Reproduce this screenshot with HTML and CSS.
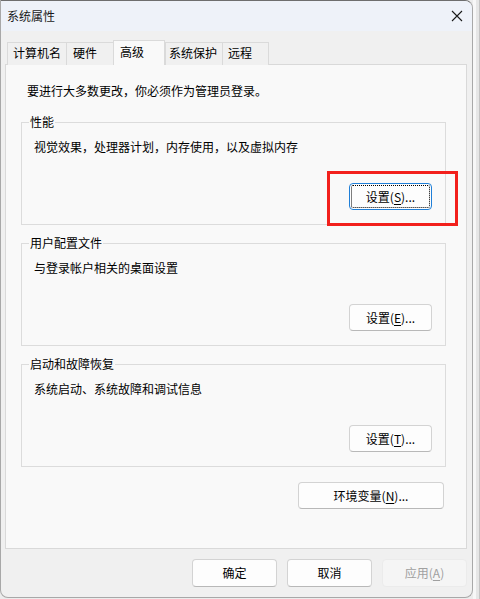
FILE: index.html
```html
<!DOCTYPE html>
<html lang="zh-CN">
<head>
<meta charset="utf-8">
<title>系统属性</title>
<link rel="stylesheet" href="styles.css">
</head>
<body>
<div class="window">
  <div class="titlebar">
    <span class="title">系统属性</span>
    <svg class="close" width="12" height="12" viewBox="0 0 12 12" aria-hidden="true">
      <path d="M1 1 L11 11 M11 1 L1 11" stroke="#1a1a1a" stroke-width="1.1" fill="none"/>
    </svg>
  </div>
  <div class="content">
    <div class="tabs">
      <div class="tab tab-computer">计算机名</div>
      <div class="tab tab-hardware">硬件</div>
      <div class="tab tab-advanced selected">高级</div>
      <div class="tab tab-protect">系统保护</div>
      <div class="tab tab-remote">远程</div>
    </div>
    <div class="panel">
      <p class="note">要进行大多数更改，你必须作为管理员登录。</p>
      <fieldset class="group">
        <legend>性能</legend>
        <p class="desc">视觉效果，处理器计划，内存使用，以及虚拟内存</p>
        <div class="btn-row"><button class="btn focused">设置(<u>S</u>)...</button></div>
      </fieldset>
      <fieldset class="group">
        <legend>用户配置文件</legend>
        <p class="desc">与登录帐户相关的桌面设置</p>
        <div class="btn-row"><button class="btn">设置(<u>E</u>)...</button></div>
      </fieldset>
      <fieldset class="group">
        <legend>启动和故障恢复</legend>
        <p class="desc">系统启动、系统故障和调试信息</p>
        <div class="btn-row"><button class="btn">设置(<u>T</u>)...</button></div>
      </fieldset>
      <div class="env-row"><button class="btn btn-wide">环境变量(<u>N</u>)...</button></div>
      <div class="highlight"></div>
    </div>
    <div class="actions">
      <button class="btn btn-action">确定</button>
      <button class="btn btn-action">取消</button>
      <button class="btn btn-action disabled">应用(<u>A</u>)</button>
    </div>
  </div>
</div>
<div class="edge"></div>
</body>
</html>
```
FILE: styles.css
```css
* { box-sizing: border-box; }
html, body { margin: 0; padding: 0; }
body {
  width: 480px;
  height: 599px;
  overflow: hidden;
  display: flex;
  background: #ececec;
  font-family: "Noto Sans CJK SC", "Noto Sans", sans-serif;
  font-size: 12px;
  line-height: 16px;
  color: #000;
}
.window {
  width: 473px;
  height: 598px;
  flex: none;
  background: #f0f0f0;
  border: 1px solid #a8a8a8;
  border-top-color: #6e6e6e;
  border-radius: 0 8px 8px 8px;
  overflow: hidden;
  display: flex;
  flex-direction: column;
}
.edge {
  flex: 1;
  border-left: 3px solid #f7f7f7;
  border-right: 1px solid #c4c4c4;
  background: #e6e6e6;
}
.titlebar {
  height: 30px;
  flex: none;
  background: #eef2f9;
  display: flex;
  align-items: center;
  justify-content: space-between;
  padding: 0 7px 0 6px;
}
.title { color: #1a1a1a; }
.close { margin-right: 2px; }
.content {
  flex: 1;
  display: flex;
  flex-direction: column;
  padding: 9px 5px 0 4px;
}
.tabs {
  display: flex;
  align-items: flex-end;
  height: 25px;
  margin-bottom: -1px;
  padding-left: 2px;
  position: relative;
  z-index: 1;
}
.tab {
  height: 23px;
  border: 1px solid #dadada;
  border-bottom: none;
  background: #f0f0f0;
  line-height: 20px;
  white-space: nowrap;
}
.tab-computer { width: 60px; padding-left: 5px; }
.tab-hardware { width: 48px; padding-left: 6px; margin-left: -1px; }
.tab-advanced { width: 52px; padding-left: 6px; margin-left: -1px; }
.tab-protect { width: 58px; padding-left: 3px; }
.tab-remote { width: 47px; padding-left: 5px; margin-left: -1px; }
.tab.selected {
  height: 25px;
  background: #f9f9f9;
  line-height: 22px;
}
.panel {
  position: relative;
  height: 485px;
  flex: none;
  background: #f9f9f9;
  border: 1px solid #d9d9d9;
  padding: 18px 20px 0 15px;
}
.note {
  margin: 0 0 15px 6px;
}
.group {
  margin: 0 0 10px 0;
  padding: 9px 13px 14px 12px;
  border: 1px solid #dcdcdc;
  min-width: 0;
}
.group legend {
  margin-left: -5px;
  padding: 0 1px;
  line-height: 16px;
}
.desc { margin: 0; }
.btn-row {
  display: flex;
  justify-content: flex-end;
  margin-top: 28px;
}
.btn {
  font: inherit;
  color: #000;
  height: 27px;
  width: 83px;
  padding: 0;
  background: #fdfdfd;
  border: 1px solid #d3d3d3;
  border-bottom-color: #b8b8b8;
  border-radius: 4px;
  line-height: 24px;
  text-align: center;
}
.btn u { text-underline-offset: 2px; }
.btn.focused {
  border: 1px solid #1f7fd8;
  outline: 1px dotted #000;
  outline-offset: -3px;
}
.env-row {
  display: flex;
  justify-content: flex-end;
  margin-top: 15px;
  padding-right: 2px;
}
.btn-wide { width: 146px; }
.highlight {
  position: absolute;
  left: 321px;
  top: 106px;
  width: 131px;
  height: 55px;
  border: 3px solid #f2201c;
}
.actions {
  display: flex;
  justify-content: flex-end;
  gap: 10px;
  margin-top: 10px;
}
.btn-action { width: 85px; height: 28px; }
.btn.disabled {
  background: #f5f5f5;
  border-color: #ebebeb;
  color: #a0a0a0;
}
```
